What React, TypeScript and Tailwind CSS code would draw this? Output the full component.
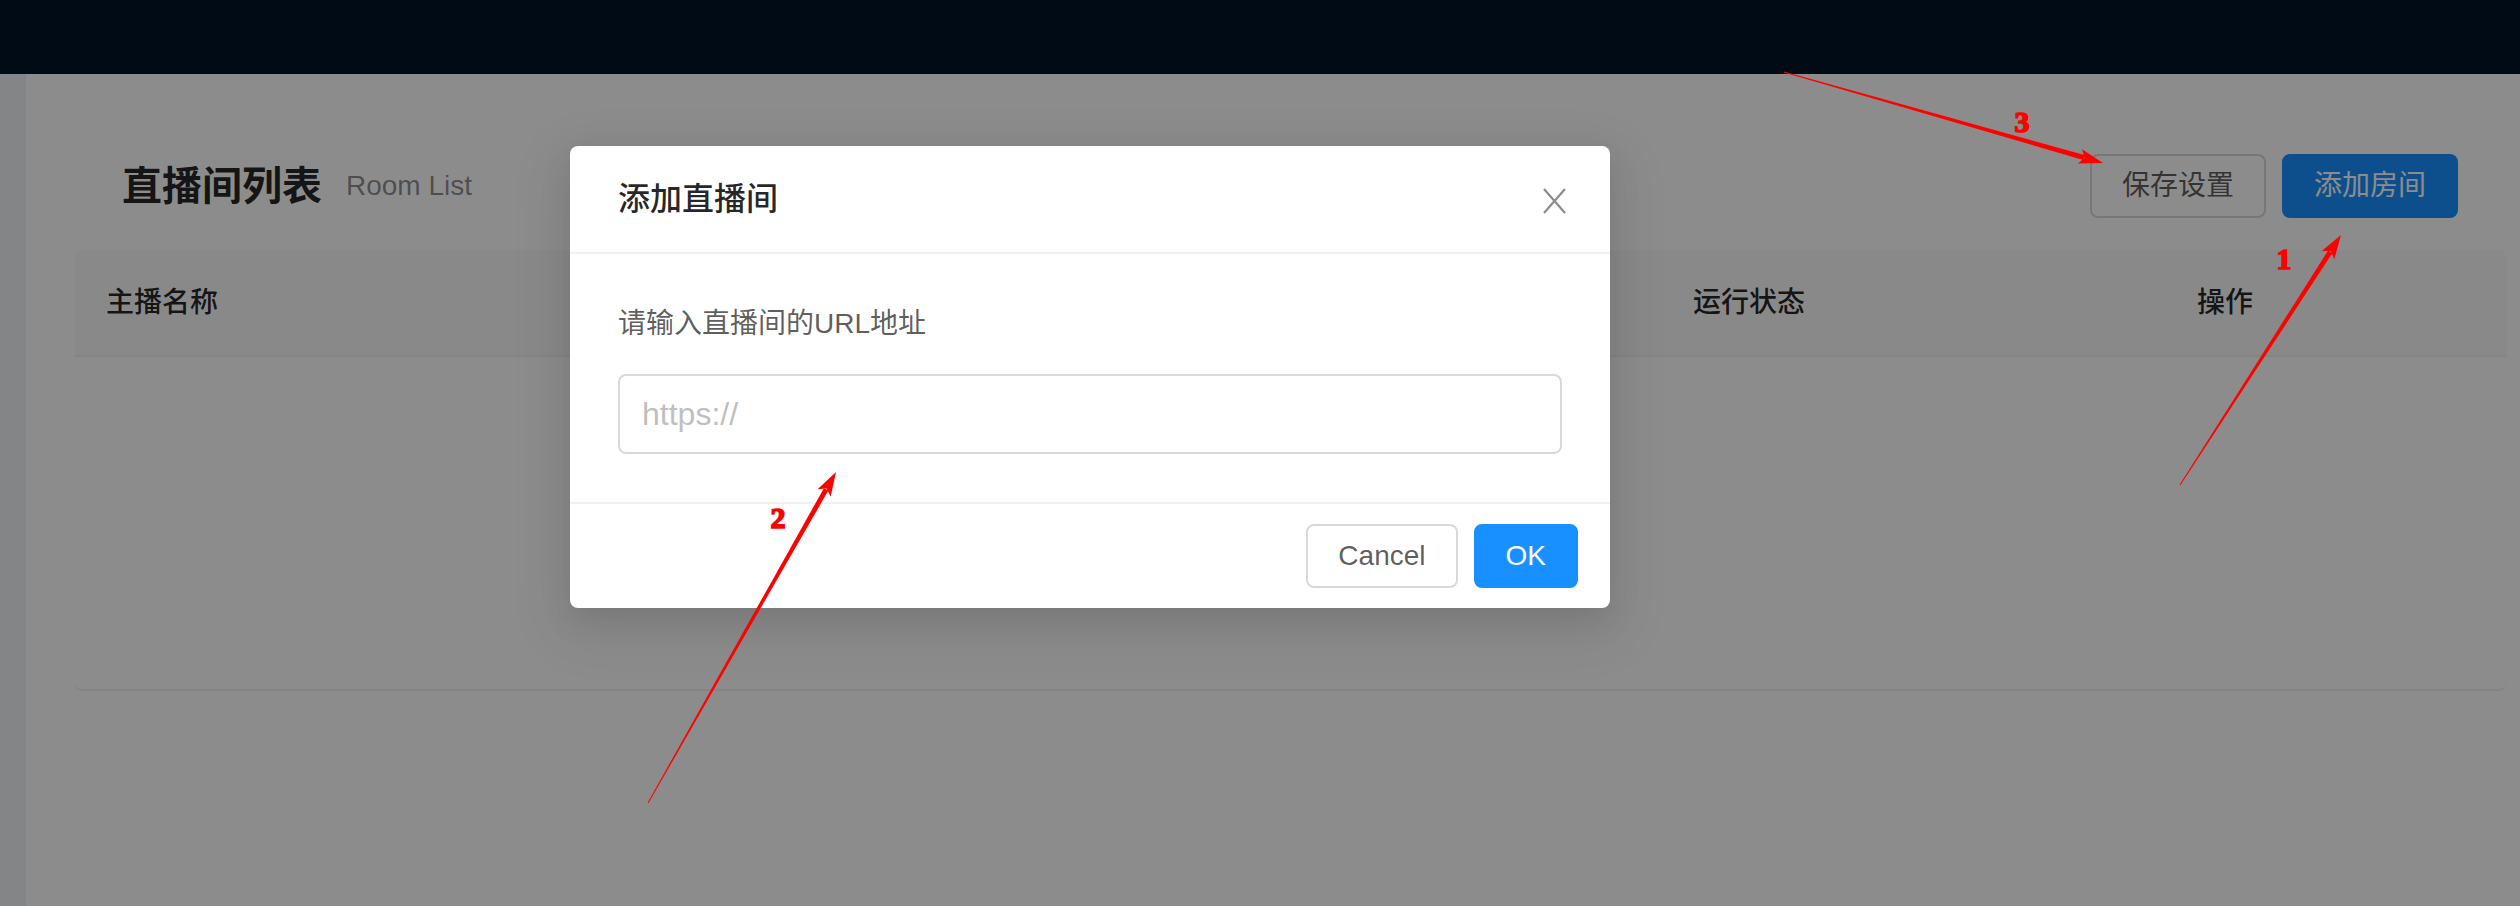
import React from 'react';

const FONT = "font-['Liberation_Sans','Noto_Sans_CJK_SC',sans-serif]";

type Pt = [number, number];

// tapered red arrow, thin at the tail, wedge head at the tip
function Arrow({ from, to }: { from: Pt; to: Pt }) {
  const dx = to[0] - from[0];
  const dy = to[1] - from[1];
  const len = Math.hypot(dx, dy);
  const ux = dx / len;
  const uy = dy / len;
  const nx = -uy;
  const ny = ux;
  const headLen = 24;
  const headW = 15;
  const shaftW = 5;
  const bx = to[0] - ux * headLen;
  const by = to[1] - uy * headLen;
  const shaft = [
    [from[0] + nx * 0.5, from[1] + ny * 0.5],
    [bx + ux * 4 + nx * (shaftW / 2), by + uy * 4 + ny * (shaftW / 2)],
    [bx + ux * 4 - nx * (shaftW / 2), by + uy * 4 - ny * (shaftW / 2)],
    [from[0] - nx * 0.5, from[1] - ny * 0.5],
  ];
  const head = [
    [to[0], to[1]],
    [bx + nx * (headW / 2), by + ny * (headW / 2)],
    [bx + ux * 5, by + uy * 5],
    [bx - nx * (headW / 2), by - ny * (headW / 2)],
  ];
  const fmt = (p: number[][]) => p.map(q => `${q[0].toFixed(1)},${q[1].toFixed(1)}`).join(' ');
  return (
    <g fill="#ff0000">
      <polygon points={fmt(shaft)} />
      <polygon points={fmt(head)} />
    </g>
  );
}

function Annotations() {
  const labels: { n: string; x: number; y: number }[] = [
    { n: '1', x: 2284, y: 258 },
    { n: '2', x: 778, y: 517 },
    { n: '3', x: 2022, y: 121 },
  ];
  return (
    <svg className="pointer-events-none absolute left-0 top-0" width={2520} height={906} viewBox="0 0 2520 906">
      <Arrow from={[1784, 72]} to={[2103, 163]} />
      <Arrow from={[2180, 485]} to={[2341, 235]} />
      <Arrow from={[648, 803]} to={[836, 472]} />
      {labels.map(l => (
        <text
          key={l.n}
          x={l.x}
          y={l.y}
          textAnchor="middle"
          dominantBaseline="central"
          fill="#ff0000"
          stroke="#ff0000"
          strokeWidth={1.6}
          fontFamily="'Liberation Serif', serif"
          fontWeight={700}
          fontSize={30}
        >
          {l.n}
        </text>
      ))}
    </svg>
  );
}

const columns = [
  { key: 'name', title: '主播名称' },
  { key: 'platform', title: '直播平台' },
  { key: 'url', title: '直播间地址' },
  { key: 'status', title: '运行状态' },
  { key: 'action', title: '操作' },
];

function RoomTable() {
  return (
    <div>
      <div className="grid h-[107px] grid-cols-[560px_500px_527px_504px_1fr] items-center rounded-t-[8px] border-b-2 border-[#f0f0f0] bg-[#fafafa]">
        {columns.map(c => (
          <div key={c.key} className="px-[32px] text-[28px] font-medium text-black/85">
            {c.title}
          </div>
        ))}
      </div>
      <div className="h-[334px] rounded-b-[8px] border-b-2 border-[#f0f0f0]" />
    </div>
  );
}

function AddRoomModal() {
  return (
    <div className="absolute left-[570px] top-[146px] w-[1040px] rounded-[8px] bg-white shadow-[0_12px_32px_0_rgba(0,0,0,0.1),0_18px_56px_16px_rgba(0,0,0,0.05)]">
      <div className="relative flex h-[108px] items-center border-b-2 border-[#f0f0f0] px-[48px]">
        <h3 className="text-[32px] font-medium text-black/85">添加直播间</h3>
        <button className="absolute right-0 top-0 flex h-[110px] w-[112px] items-center justify-center">
          <svg width="23" height="26" viewBox="0 0 23 26">
            <path d="M1 1 L22 25 M22 1 L1 25" stroke="#8c8c8c" strokeWidth="2.2" fill="none" />
          </svg>
        </button>
      </div>
      <div className="p-[48px]">
        <p className="mb-[28px] text-[28px] leading-[44px] text-black/65">请输入直播间的URL地址</p>
        <input
          className="block h-[80px] w-full rounded-[8px] border-2 border-[#d9d9d9] px-[22px] text-[32px] text-black/85 outline-none placeholder:text-[#bfbfbf]"
          placeholder="https://"
        />
      </div>
      <div className="flex justify-end gap-[16px] border-t-2 border-[#f0f0f0] px-[32px] py-[20px]">
        <button className="h-[64px] rounded-[8px] border-2 border-[#d9d9d9] bg-white px-[30px] text-[28px] text-black/65">
          Cancel
        </button>
        <button className="h-[64px] rounded-[8px] border-2 border-[#1890ff] bg-[#1890ff] px-[30px] text-[28px] text-white">
          OK
        </button>
      </div>
    </div>
  );
}

export default function App() {
  return (
    <div className={`relative h-[906px] w-[2520px] overflow-hidden bg-white ${FONT}`}>
      <header className="h-[74px] bg-[#001529]" />
      <div className="flex h-[832px]">
        <aside className="w-[26px] bg-[#f0f2f5]" />
        <main className="flex-1 pl-[48px] pr-[14px] pt-[48px]">
          <div className="flex items-center justify-between px-[48px] py-[32px]">
            <div className="flex items-center gap-[24px]">
              <h1 className="text-[40px] font-semibold leading-[64px] text-black/85">直播间列表</h1>
              <span className="text-[28px] leading-[40px] text-black/45">Room List</span>
            </div>
            <div className="flex gap-[16px]">
              <button className="h-[64px] rounded-[8px] border-2 border-[#d9d9d9] bg-white px-[30px] text-[28px] text-black/65">
                保存设置
              </button>
              <button className="h-[64px] rounded-[8px] border-2 border-[#1890ff] bg-[#1890ff] px-[30px] text-[28px] text-white">
                添加房间
              </button>
            </div>
          </div>
          <RoomTable />
        </main>
      </div>

      <div className="absolute inset-0 bg-black/45" />
      <AddRoomModal />
      <Annotations />
    </div>
  );
}
